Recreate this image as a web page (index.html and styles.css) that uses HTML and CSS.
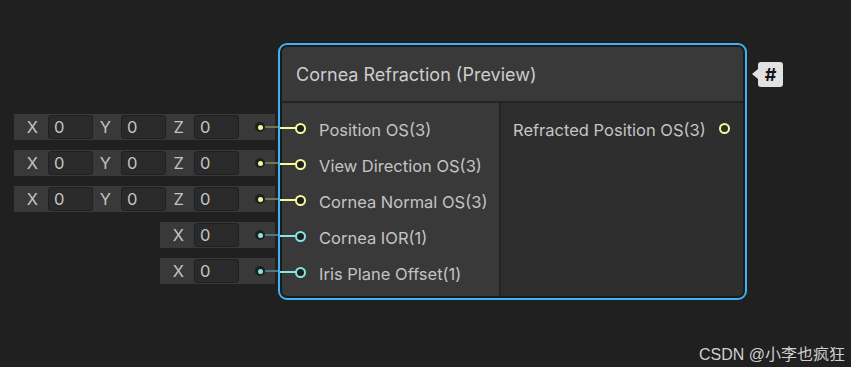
FILE: index.html
```html
<!DOCTYPE html>
<html lang="zh">
<head>
    <meta charset="UTF-8">
    <meta name="viewport" content="width=device-width, initial-scale=1.0">
    <title>Cornea Refraction</title>
    <link rel="stylesheet" href="styles.css">
</head>
<body>
    <div class="graph">
        <div class="node">
            <div class="node-title">Cornea Refraction (Preview)</div>
            <div class="node-body">
                <div class="inputs">
                    <div class="port-row vec3">
                        <div class="inline-field">
                            <span class="axis">X</span><span class="num">0</span>
                            <span class="axis">Y</span><span class="num">0</span>
                            <span class="axis">Z</span><span class="num">0</span>
                            <span class="dot"></span>
                        </div>
                        <span class="port"></span>
                        <span class="port-label">Position OS(3)</span>
                    </div>
                    <div class="port-row vec3">
                        <div class="inline-field">
                            <span class="axis">X</span><span class="num">0</span>
                            <span class="axis">Y</span><span class="num">0</span>
                            <span class="axis">Z</span><span class="num">0</span>
                            <span class="dot"></span>
                        </div>
                        <span class="port"></span>
                        <span class="port-label">View Direction OS(3)</span>
                    </div>
                    <div class="port-row vec3">
                        <div class="inline-field">
                            <span class="axis">X</span><span class="num">0</span>
                            <span class="axis">Y</span><span class="num">0</span>
                            <span class="axis">Z</span><span class="num">0</span>
                            <span class="dot"></span>
                        </div>
                        <span class="port"></span>
                        <span class="port-label">Cornea Normal OS(3)</span>
                    </div>
                    <div class="port-row vec1">
                        <div class="inline-field">
                            <span class="axis">X</span><span class="num">0</span>
                            <span class="dot"></span>
                        </div>
                        <span class="port"></span>
                        <span class="port-label">Cornea IOR(1)</span>
                    </div>
                    <div class="port-row vec1">
                        <div class="inline-field">
                            <span class="axis">X</span><span class="num">0</span>
                            <span class="dot"></span>
                        </div>
                        <span class="port"></span>
                        <span class="port-label">Iris Plane Offset(1)</span>
                    </div>
                </div>
                <div class="outputs">
                    <div class="port-row out vec3">
                        <span class="port-label">Refracted Position OS(3)</span>
                        <span class="port"></span>
                    </div>
                </div>
            </div>
        </div>
        <div class="badge">#</div>
        <div class="watermark">CSDN @小李也疯狂</div>
    </div>
</body>
</html>
```

FILE: styles.css
```css
body {
    margin: 0;
    background-color: #202020;
    color: #c4c4c4;
    font-family: Inter, "Noto Sans", sans-serif;
}
.graph {
    position: relative;
    width: 851px;
    height: 367px;
    overflow: hidden;
}

/* node */
.node {
    position: absolute;
    left: 278px;
    top: 43px;
    width: 469px;
    height: 257px;
    box-sizing: border-box;
    padding: 4px;
    background-color: #1b1b1b;
    border-radius: 9px;
    display: flex;
    flex-direction: column;
}
.node::after {
    content: "";
    position: absolute;
    inset: 0;
    border: 2px solid #3db3ef;
    border-radius: 9px;
    z-index: 3;
    pointer-events: none;
}
.node-title {
    height: 54px;
    flex: none;
    display: flex;
    align-items: center;
    padding-left: 14px;
    font-size: 18px;
    color: #cdcdcd;
    background-color: #393939;
    border-bottom: 2px solid #232323;
    border-radius: 5px 5px 0 0;
}
.node-body {
    flex: 1;
    display: flex;
}
.inputs {
    width: 217px;
    padding-top: 7px;
    background-color: #393939;
    border-right: 2px solid #232323;
    border-bottom-left-radius: 5px;
}
.outputs {
    flex: 1;
    padding-top: 7px;
    background-color: #2e2e2e;
    border-bottom-right-radius: 5px;
}

/* ports */
.vec3 {
    --c: #f6f89a;
    --m: #72745a;
}
.vec1 {
    --c: #84e4e7;
    --m: #50777a;
}
.port-row {
    position: relative;
    height: 36px;
    display: flex;
    align-items: center;
    font-size: 16.5px;
}
.port-label {
    position: relative;
    top: 2px;
}
.inputs .port-row {
    padding-left: 13px;
}
.port-row.out {
    padding-left: 12px;
    padding-right: 13px;
    justify-content: space-between;
}
.port {
    position: relative;
    flex: none;
    width: 11px;
    height: 11px;
    box-sizing: border-box;
    border: 2px solid var(--c);
    border-radius: 50%;
    background-color: #1f1f1f;
}
.inputs .port {
    margin-right: 13px;
}
.inputs .port::before {
    content: "";
    position: absolute;
    right: 100%;
    top: 50%;
    margin-top: -1px;
    width: 17px;
    height: 2px;
    background-color: var(--c);
}
.out .port {
    background-color: transparent;
}

/* inline value fields */
.inline-field {
    position: absolute;
    right: calc(100% + 7px);
    top: 4px;
    height: 26px;
    display: flex;
    align-items: center;
    background-color: #393939;
    font-size: 16.5px;
}
.axis {
    width: 28px;
    box-sizing: border-box;
    padding-right: 10px;
    text-align: right;
}
.axis:first-child {
    width: 34px;
}
.num {
    width: 45px;
    height: 24px;
    box-sizing: border-box;
    padding-left: 5px;
    line-height: 22px;
    background-color: #2a2a2a;
    border: 1px solid #212121;
    border-radius: 3px;
}
.dot {
    position: relative;
    width: 10px;
    height: 10px;
    margin-left: 16px;
    margin-right: 10px;
    border-radius: 50%;
    background-color: #1f1f1f;
}
.dot::after {
    content: "";
    position: absolute;
    left: 2.5px;
    top: 2.5px;
    width: 5px;
    height: 5px;
    border-radius: 50%;
    background-color: var(--c);
}
.dot::before {
    content: "";
    position: absolute;
    left: 100%;
    top: 4px;
    width: 15px;
    height: 2px;
    background-color: var(--m);
}

/* extras */
.badge {
    position: absolute;
    left: 758px;
    top: 62px;
    width: 25px;
    height: 25px;
    display: flex;
    align-items: center;
    justify-content: center;
    background-color: #e2e2e2;
    color: #161616;
    font-size: 18px;
    font-weight: bold;
    border-radius: 3px;
}
.badge::before {
    content: "";
    position: absolute;
    right: 100%;
    top: 7px;
    border-top: 5px solid transparent;
    border-bottom: 5px solid transparent;
    border-right: 6px solid #e2e2e2;
}
.watermark {
    position: absolute;
    left: 699px;
    top: 341px;
    font-family: "Liberation Sans", "Noto Sans CJK SC", sans-serif;
    font-size: 16px;
    color: #cfcfcf;
}
```
